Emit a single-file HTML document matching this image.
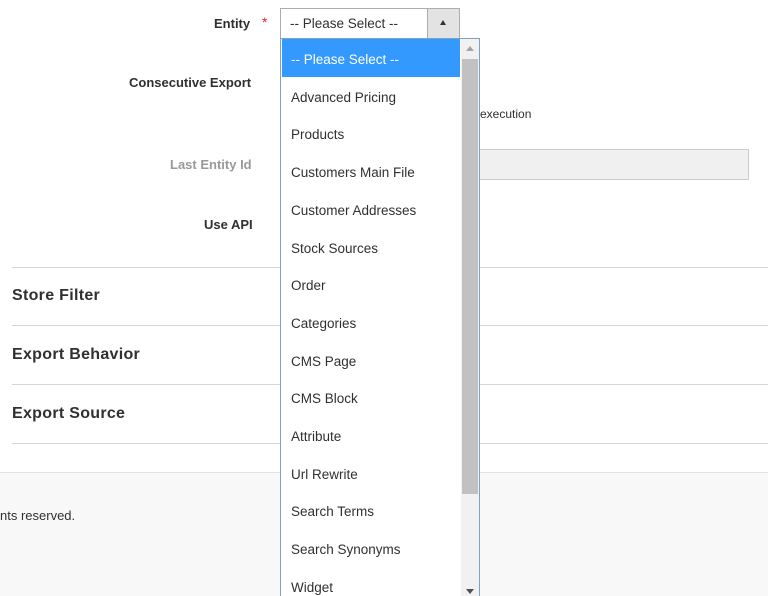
<!DOCTYPE html>
<html><head><style>
*{margin:0;padding:0;box-sizing:border-box}
html,body{width:768px;height:596px;overflow:hidden}
body{background:#fff;font-family:"Liberation Sans",sans-serif;color:#303030;position:relative;font-size:13px}
.a{position:absolute;white-space:nowrap}
.lbl{font-weight:bold;font-size:13px;color:#303030;text-align:right}
.hr{position:absolute;left:12px;right:0;height:1px;background:#d6d6d6}
.sec{position:absolute;left:12px;font-size:16px;font-weight:bold;color:#303030;letter-spacing:.3px}
.it{position:absolute;left:1px;width:178px;height:37.7px;line-height:37.7px;padding-top:2px;padding-left:9px;font-size:13.5px;color:#303030}
</style></head><body>
<div class="a lbl" style="left:214px;top:16px">Entity</div>
<div class="a" style="left:262px;top:14px;color:#e22626;font-size:14px">*</div>
<div class="a" style="left:280px;top:8px;width:180px;height:31px;border:1px solid #adadad;background:#fff"></div>
<div class="a" style="left:290px;top:16px;color:#303030;font-size:13.5px">-- Please Select --</div>
<div class="a" style="left:427px;top:8px;width:33px;height:31px;background:#e3e3e3;border:1px solid #adadad"></div>
<div class="a" style="left:440px;top:20px;width:0;height:0;border-left:3.5px solid transparent;border-right:3.5px solid transparent;border-bottom:5px solid #333"></div>
<div class="a lbl" style="left:129px;top:75px">Consecutive Export</div>
<div class="a" style="left:480px;top:107px;font-size:12px;color:#303030">execution</div>
<div class="a lbl" style="left:170px;top:157px;color:#999">Last Entity Id</div>
<div class="a" style="left:470px;top:149px;width:279px;height:31px;background:#f0f0f0;border:1px solid #ccc"></div>
<div class="a lbl" style="left:204px;top:217px">Use API</div>
<div class="hr" style="top:267px"></div>
<div class="sec" style="top:287px">Store Filter</div>
<div class="hr" style="top:325px"></div>
<div class="sec" style="top:346px">Export Behavior</div>
<div class="hr" style="top:384px"></div>
<div class="sec" style="top:405px">Export Source</div>
<div class="hr" style="top:443px"></div>
<div class="a" style="left:0;top:472px;width:768px;height:124px;background:#f8f8f8;border-top:1px solid #e3e3e3"></div>
<div class="a" style="left:0;top:508px;color:#303030">nts reserved.</div>
<div class="a" style="left:280px;top:38px;width:200px;height:570px;background:#fff;border:1px solid #7fa0c0">
<div class="it" style="top:0;background:#3399ff;color:#fff">-- Please Select --</div>
<div class="it" style="top:37.7px">Advanced Pricing</div>
<div class="it" style="top:75.4px">Products</div>
<div class="it" style="top:113.1px">Customers Main File</div>
<div class="it" style="top:150.8px">Customer Addresses</div>
<div class="it" style="top:188.5px">Stock Sources</div>
<div class="it" style="top:226.2px">Order</div>
<div class="it" style="top:263.9px">Categories</div>
<div class="it" style="top:301.6px">CMS Page</div>
<div class="it" style="top:339.3px">CMS Block</div>
<div class="it" style="top:377px">Attribute</div>
<div class="it" style="top:414.7px">Url Rewrite</div>
<div class="it" style="top:452.4px">Search Terms</div>
<div class="it" style="top:490.1px">Search Synonyms</div>
<div class="it" style="top:527.8px">Widget</div>
<div class="a" style="left:180px;top:0;width:18px;height:570px;background:#f1f1f1"></div>
<div class="a" style="left:181px;top:20px;width:16px;height:435px;background:#c1c1c1"></div>
<div class="a" style="left:185px;top:7px;border-left:4px solid transparent;border-right:4px solid transparent;border-bottom:5px solid #a3a3a3"></div>
<div class="a" style="left:185px;top:550px;border-left:4px solid transparent;border-right:4px solid transparent;border-top:5px solid #505050"></div>
</div>
</body></html>
